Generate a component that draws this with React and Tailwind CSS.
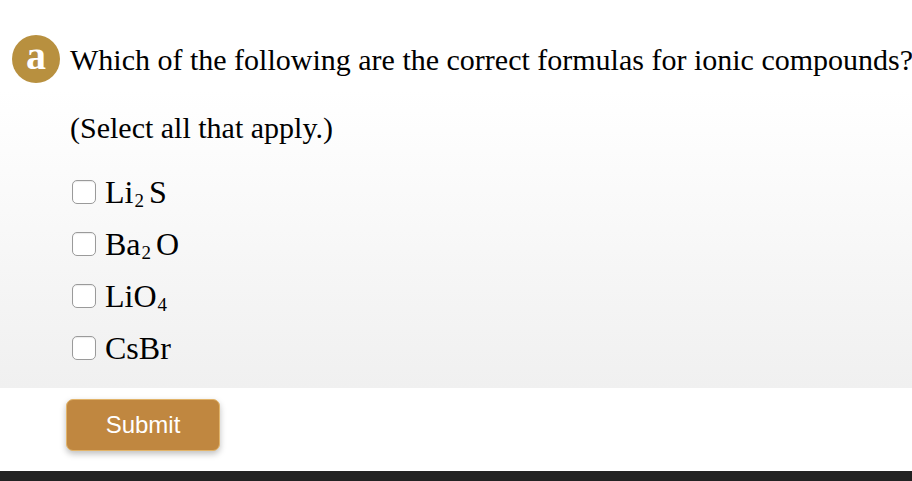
export default function App() {
  const options = [
    { base: "Li", sub: "2", rest: "S" },
    { base: "Ba", sub: "2", rest: "O" },
    { base: "LiO", sub: "4", rest: "" },
    { base: "CsBr", sub: "", rest: "" },
  ];
  return (
    <div className="w-[912px] h-[481px] bg-white flex flex-col overflow-hidden" style={{ fontFamily: '"Liberation Serif", serif' }}>
      <div className="h-[90px] flex items-start pt-[35px]">
        <div className="ml-[12px] w-[48px] h-[48px] rounded-full bg-[#b8903f] flex items-center justify-center shrink-0">
          <span className="text-white font-bold text-[40px] leading-none -mt-[7px]">a</span>
        </div>
        <div className="ml-[10px] mt-[1px] text-[30px] leading-[48px] text-black whitespace-nowrap">
          Which of the following are the correct formulas for ionic compounds?
        </div>
      </div>
      <div className="h-[298px] bg-gradient-to-b from-white to-[#f0f0f0] pl-[70px] pt-[20px]">
        <div className="text-[30px] leading-[36px] text-black">(Select all that apply.)</div>
        <div className="flex flex-col gap-[20px] mt-[30px]">
          {options.map((o, i) => (
            <label key={i} className="flex items-center h-[32px]">
              <span className="ml-[2px] w-[24px] h-[24px] rounded-[5px] border border-[#9a9a9a] bg-white shadow-[inset_0_1px_1px_rgba(0,0,0,0.08)] shrink-0"></span>
              <span className="ml-[9px] text-[32px] leading-none text-black whitespace-nowrap">
                {o.base}
                {o.sub && <span className="text-[19px] relative top-[4px] ml-[1px] mr-[5px]">{o.sub}</span>}
                {o.rest}
              </span>
            </label>
          ))}
        </div>
      </div>
      <div className="h-[83px] pl-[66px] pt-[11px]">
        <button className="w-[154px] h-[52px] rounded-[7px] bg-[#c08740] border border-[#e2b46a] shadow-[0_3px_6px_rgba(0,0,0,0.25)] text-white text-[24px]" style={{ fontFamily: '"Liberation Sans", Arial, sans-serif' }}>
          Submit
        </button>
      </div>
      <div className="flex-1 bg-[#222222]"></div>
    </div>
  );
}
